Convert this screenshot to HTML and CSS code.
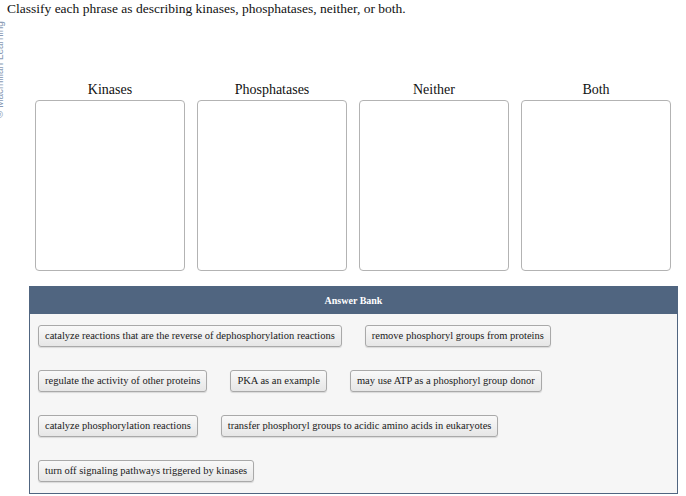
FILE: index.html
```html
<!DOCTYPE html>
<html>
<head>
<meta charset="utf-8">
<link rel="stylesheet" href="styles.css">
</head>
<body>
<div class="watermark">© Macmillan Learning</div>
<p class="prompt">Classify each phrase as describing kinases, phosphatases, neither, or both.</p>
<div class="bins">
  <div class="bin"><div class="bin-label">Kinases</div><div class="bin-box"></div></div>
  <div class="bin"><div class="bin-label">Phosphatases</div><div class="bin-box"></div></div>
  <div class="bin"><div class="bin-label">Neither</div><div class="bin-box"></div></div>
  <div class="bin"><div class="bin-label">Both</div><div class="bin-box"></div></div>
</div>
<div class="bank">
  <div class="bank-header">Answer Bank</div>
  <div class="bank-items">
    <span class="chip">catalyze reactions that are the reverse of dephosphorylation reactions</span>
    <span class="chip">remove phosphoryl groups from proteins</span>
    <span class="chip">regulate the activity of other proteins</span>
    <span class="chip">PKA as an example</span>
    <span class="chip">may use ATP as a phosphoryl group donor</span>
    <span class="chip">catalyze phosphorylation reactions</span>
    <span class="chip">transfer phosphoryl groups to acidic amino acids in eukaryotes</span>
    <span class="chip">turn off signaling pathways triggered by kinases</span>
  </div>
</div>
</body>
</html>
```
FILE: styles.css
```css
html, body {
  margin: 0;
  padding: 0;
  background: #ffffff;
}
body {
  font-family: "Liberation Serif", "Times New Roman", serif;
  color: #111;
  position: relative;
  width: 686px;
  height: 496px;
  overflow: hidden;
}
.watermark {
  position: absolute;
  left: -56px;
  top: 57px;
  width: 112px;
  transform: rotate(-90deg);
  font-family: "Liberation Sans", Arial, sans-serif;
  font-size: 10px;
  line-height: 10px;
  color: #8a9bb5;
  white-space: nowrap;
}
.prompt {
  margin: 0;
  padding: 1px 0 0 7px;
  font-size: 13.5px;
  line-height: 16px;
}
.bins {
  display: flex;
  gap: 12px;
  margin: 65px 0 0 35px;
}
.bin {
  width: 150px;
}
.bin-label {
  text-align: center;
  font-size: 14px;
  line-height: 16px;
  margin-bottom: 2px;
}
.bin-box {
  height: 169px;
  border: 1px solid #b3b3b3;
  border-radius: 4px;
  background: #fff;
}
.bank {
  margin: 15px 0 0 29px;
  width: 647px;
  border: 1px solid #506580;
  background: #f6f6f6;
}
.bank-header {
  background: #506580;
  color: #fff;
  font-size: 10px;
  font-weight: bold;
  text-align: center;
  height: 27px;
  line-height: 27px;
}
.bank-items {
  display: flex;
  flex-wrap: wrap;
  column-gap: 23px;
  row-gap: 23px;
  padding: 11px 8px 11px 8px;
}
.chip {
  display: inline-block;
  height: 20px;
  line-height: 19px;
  padding: 0 6px;
  border: 1px solid #a9a9a9;
  border-radius: 3px;
  background: linear-gradient(#f9f9f9, #e6e6e6);
  box-shadow: 0 1px 1px rgba(0,0,0,0.12);
  font-size: 10.5px;
  color: #1a1a1a;
  white-space: nowrap;
}
```
